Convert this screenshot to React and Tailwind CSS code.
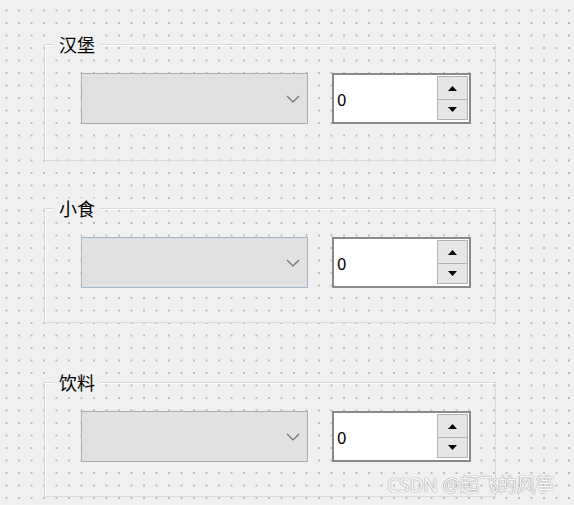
const GROUPS = [
  { title: '汉堡', mt: 'mt-[44px]', h: 'h-[117px]', comboBorder: 'border-[#adadad]' },
  { title: '小食', mt: 'mt-[47px]', h: 'h-[115px]', comboBorder: 'border-[#a3b6ca]' },
  { title: '饮料', mt: 'mt-[59px]', h: 'h-[115px]', comboBorder: 'border-[#adadad]' },
];

function ComboBox({ border }) {
  return (
    <div className={`w-[227px] h-[51px] bg-[#e1e1e1] border ${border} flex items-center justify-end pr-[7px]`}>
      <svg width="14" height="8" viewBox="0 0 14 8" className="mt-[1px]">
        <path d="M1 1 L7 7 L13 1" fill="none" stroke="#707070" strokeWidth="1.2" />
      </svg>
    </div>
  );
}

function SpinBox() {
  return (
    <div className="w-[139px] h-[51px] bg-white border-2 border-[#8a8a8a] flex items-stretch">
      <div className="flex-1 flex items-center pl-[3px] text-[17px] text-black font-['Noto_Sans_CJK_SC',sans-serif] font-normal">0</div>
      <div className="w-[31px] flex flex-col pt-[1px] pb-[2px] mr-[1px]">
        <div className="h-[24px] bg-[#e5e5e5] border border-[#b4b4b4] flex items-center justify-center">
          <svg width="9" height="5" viewBox="0 0 9 5"><path d="M0 5 L4.5 0 L9 5 Z" fill="#000" /></svg>
        </div>
        <div className="flex-1 bg-[#e5e5e5] border border-t-0 border-[#b4b4b4] flex items-center justify-center">
          <svg width="9" height="5" viewBox="0 0 9 5"><path d="M0 0 L9 0 L4.5 5 Z" fill="#000" /></svg>
        </div>
      </div>
    </div>
  );
}

export default function App() {
  return (
    <div className="relative w-[574px] h-[505px] overflow-hidden bg-[#f0f0f0] bg-[radial-gradient(circle_at_1px_1px,#a0a0a0_0.5px,transparent_1.1px)] bg-[length:12.5px_12.5px] bg-[position:5.5px_9.5px] font-['Noto_Sans_CJK_SC',sans-serif]">
      {GROUPS.map((g) => (
        <div
          key={g.title}
          className={`relative ml-[44px] w-[452px] ${g.mt} ${g.h} border border-[#d9d9d9] shadow-[inset_1px_1px_0_#ffffff]`}
        >
          <span className="absolute left-[9px] top-[-11px] px-[5px] bg-[#f0f0f0] text-[18px] leading-[20px] font-normal text-black">
            {g.title}
          </span>
          <div className="flex items-start gap-[24px] pl-[36px] pt-[28px]">
            <ComboBox border={g.comboBorder} />
            <SpinBox />
          </div>
        </div>
      ))}

      {/* watermark */}
      <div className="absolute left-[387px] top-[474px] text-[19px] leading-[22px] text-[#fafafa] [text-shadow:0_0_1px_#8a8a8a,0_0_1px_#8a8a8a] font-['Noto_Sans','Noto_Sans_CJK_SC',sans-serif] whitespace-nowrap">
        CSDN @起飞的风筝
      </div>
    </div>
  );
}
